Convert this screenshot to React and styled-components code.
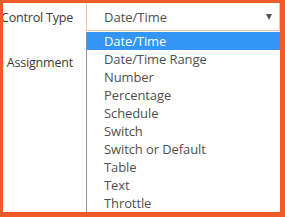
import styled, { createGlobalStyle } from "styled-components";

const GlobalStyle = createGlobalStyle`
  html, body {
    margin: 0;
    padding: 0;
    background: #ffffff;
  }
  * {
    box-sizing: border-box;
  }
`;

const Frame = styled.div`
  width: 285px;
  height: 217px;
  border-style: solid;
  border-color: #f05a28;
  border-width: 3px 5px 5px 3px;
  background: #ffffff;
  position: relative;
  overflow: hidden;
  font-family: "Open Sans", "Liberation Sans", sans-serif;
  font-size: 13px;
  color: #333333;
`;

const Form = styled.div`
  display: grid;
  grid-template-columns: 83px 1fr;
  grid-auto-rows: 28px;
  row-gap: 17px;
`;

const Label = styled.div`
  display: flex;
  align-items: center;
  justify-content: flex-end;
  padding-right: 13px;
  white-space: nowrap;
  overflow: hidden;
  font-size: 12.5px;
  letter-spacing: -0.2px;
  color: #3a3a3a;
`;

const SelectBox = styled.div`
  position: relative;
  display: flex;
  align-items: center;
  justify-content: space-between;
  padding: 0 7px 0 17px;
  border: 1px solid #f3c4a6;
  border-top: none;
  color: #505050;
`;

const Arrow = styled.span`
  width: 0;
  height: 0;
  border-left: 3.5px solid transparent;
  border-right: 3.5px solid transparent;
  border-top: 6px solid #555555;
  margin-top: 1px;
`;

const Menu = styled.ul`
  position: absolute;
  top: 29px;
  left: -1px;
  right: -3px;
  margin: 0;
  padding: 0;
  list-style: none;
  background: #ffffff;
  border: 1px solid #8795b0;
  border-top: none;
  border-right: none;
  z-index: 2;
`;

const Item = styled.li`
  height: 18px;
  line-height: 18px;
  padding-left: 17px;
  white-space: nowrap;
  letter-spacing: -0.1px;
  color: ${(p) => (p.$active ? "#ffffff" : "#505050")};
  background: ${(p) => (p.$active ? "#3395f5" : "transparent")};
`;

const options = [
  "Date/Time",
  "Date/Time Range",
  "Number",
  "Percentage",
  "Schedule",
  "Switch",
  "Switch or Default",
  "Table",
  "Text",
  "Throttle",
];

export default function App() {
  return (
    <>
      <GlobalStyle />
      <Frame>
        <Form>
          <Label>Control Type</Label>
          <SelectBox>
            <span>Date/Time</span>
            <Arrow />
            <Menu>
              {options.map((o, i) => (
                <Item key={o} $active={i === 0}>
                  {o}
                </Item>
              ))}
            </Menu>
          </SelectBox>
          <Label>Action Assignment</Label>
          <div />
        </Form>
      </Frame>
    </>
  );
}
